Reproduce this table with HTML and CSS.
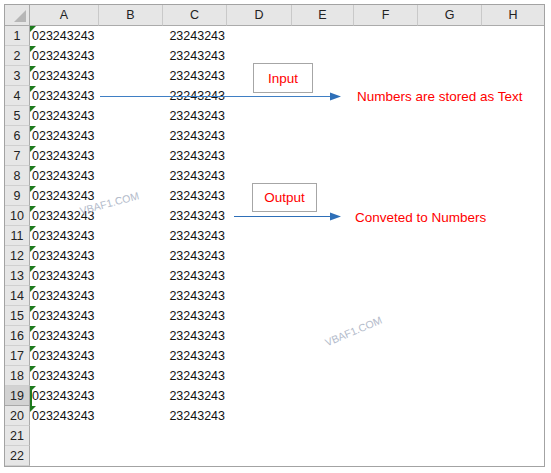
FILE: index.html
```html
<!DOCTYPE html>
<html>
<head>
<meta charset="utf-8">
<link rel="stylesheet" href="styles.css">
</head>
<body>
<div class="sheet">
  <div class="grid" id="grid">
    <div class="corner"><span class="corner-tri"></span></div>
    <div class="colhead">A</div>
    <div class="colhead">B</div>
    <div class="colhead">C</div>
    <div class="colhead">D</div>
    <div class="colhead">E</div>
    <div class="colhead">F</div>
    <div class="colhead">G</div>
    <div class="colhead last">H</div>
  </div>

  <div class="note note-input">Input</div>
  <div class="note note-output">Output</div>
  <div class="label label-1">Numbers are stored as Text</div>
  <div class="label label-2">Conveted to Numbers</div>
  <div class="mark mark-1">VBAF1.COM</div>
  <div class="mark mark-2">VBAF1.COM</div>

  <svg class="arrows" width="539" height="462" viewBox="0 0 539 462">
    <line x1="95" y1="91.5" x2="327" y2="91.5" stroke="#3f7fc4" stroke-width="1"/>
    <polygon points="336,91.5 325,87.5 325,95.5" fill="#2e6fb8"/>
    <line x1="229" y1="211.5" x2="327" y2="211.5" stroke="#2e6fb8" stroke-width="1"/>
    <polygon points="336,211.5 325,207.5 325,215.5" fill="#2e6fb8"/>
  </svg>
</div>
<script>
  var g = document.getElementById('grid');
  var html = '';
  for (var r = 1; r <= 22; r++) {
    var sel = r === 19 ? ' sel' : '';
    html += '<div class="rowhead' + sel + '">' + r + '</div>';
    for (var c = 0; c < 8; c++) {
      var cls = 'cell';
      var txt = '';
      if (r <= 20 && c === 0) { cls += ' text'; txt = '023243243'; if (r === 19) cls += ' active'; }
      if (r <= 20 && c === 2) { cls += ' num'; txt = '23243243'; }
      html += '<div class="' + cls + '">' + txt + '</div>';
    }
  }
  g.insertAdjacentHTML('beforeend', html);
</script>
</body>
</html>
```

FILE: styles.css
```css
html, body {
  margin: 0;
  padding: 0;
  background: #ffffff;
}

body {
  padding: 4px 0 0 4px;
  font-family: "Liberation Sans", Arial, sans-serif;
  color: #1a1a1a;
}

.sheet {
  position: relative;
  width: 539px;
  height: 461px;
  border: 1px solid #a3a3a3;
  background: #fff;
  overflow: hidden;
}

.grid {
  display: grid;
  grid-template-columns: 25px 69px 64px 64px 65px 62px 64px 64px 62px;
  grid-template-rows: 21px repeat(22, 20px);
}

.grid > div {
  box-sizing: border-box;
}

.corner {
  position: relative;
  background: #e6e6e6;
  border-right: 1px solid #ababab;
  border-bottom: 1px solid #ababab;
}

.corner-tri {
  position: absolute;
  right: 3px;
  bottom: 3px;
  width: 0;
  height: 0;
  border-left: 12px solid transparent;
  border-bottom: 12px solid #b6b6b6;
}

.colhead {
  background: #e6e6e6;
  border-right: 1px solid #c9c9c9;
  border-bottom: 1px solid #ababab;
  font-size: 12.5px;
  line-height: 20px;
  text-align: center;
  color: #222;
}

.colhead.last {
  border-right: none;
}

.rowhead {
  background: #e6e6e6;
  border-right: 1px solid #ababab;
  border-bottom: 1px solid #cfcfcf;
  font-size: 12.5px;
  line-height: 20px;
  text-align: center;
  color: #222;
}

.rowhead.sel {
  background: #d2d2d2;
  border-bottom-color: #a8a8a8;
}

.cell {
  position: relative;
  font-size: 12.5px;
  line-height: 20px;
  white-space: nowrap;
  color: #111;
}

.cell.text {
  padding-left: 2px;
}

.cell.text::before {
  content: "";
  position: absolute;
  left: 0;
  top: 0;
  width: 0;
  height: 0;
  border-top: 6px solid #1e7b1e;
  border-right: 6px solid transparent;
}

.cell.active {
  box-shadow: inset 2px 0 0 #1e7b1e;
}

.cell.num {
  text-align: right;
  padding-right: 2px;
}

.note {
  position: absolute;
  box-sizing: border-box;
  background: #fff;
  border: 1px solid #a6a6a6;
  color: #ff0000;
  font-size: 13.5px;
  display: flex;
  align-items: center;
  justify-content: center;
}

.note-input {
  left: 248px;
  top: 58px;
  width: 60px;
  height: 30px;
}

.note-output {
  left: 247px;
  top: 178px;
  width: 65px;
  height: 29px;
}

.label {
  position: absolute;
  color: #ff0000;
  font-size: 13.5px;
  line-height: 16px;
  white-space: nowrap;
}

.label-1 {
  left: 352px;
  top: 84px;
}

.label-2 {
  left: 350px;
  top: 205px;
}

.mark {
  position: absolute;
  color: #b4bccb;
  font-size: 10.5px;
  line-height: 12px;
  white-space: nowrap;
}

.mark-1 {
  left: 74px;
  top: 192px;
  transform: rotate(-15deg);
}

.mark-2 {
  left: 318px;
  top: 320px;
  transform: rotate(-23deg);
}

.arrows {
  position: absolute;
  left: 0;
  top: 0;
  pointer-events: none;
}
```
